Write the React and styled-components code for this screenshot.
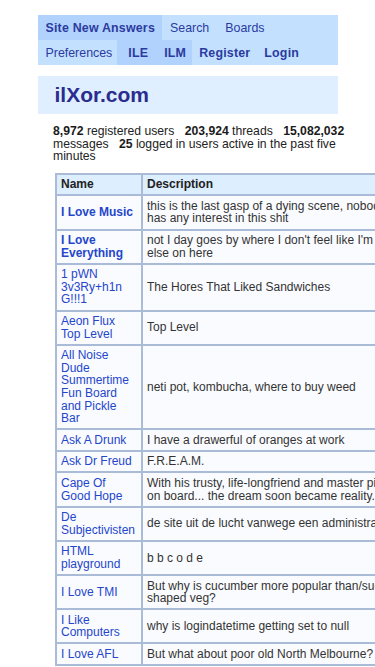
import React from "react";
import styled, { createGlobalStyle } from "styled-components";

const GlobalStyle = createGlobalStyle`
  body {
    margin: 0;
    background: #ffffff;
    font-family: "Liberation Sans", Arial, sans-serif;
    font-size: 12px;
    color: #222;
  }
`;

const Nav = styled.nav`
  width: 300px;
  margin: 15px auto 0;
  background: #c3e1ff;
  font-size: 12.4px;
`;

const NavRow = styled.div`
  display: flex;
  height: 25px;
`;

const NavItem = styled.a`
  display: flex;
  align-items: center;
  padding: ${(p) => p.$pad || "0 8px"};
  color: #2b3a9f;
  font-weight: ${(p) => (p.$bold ? "bold" : "normal")};
  letter-spacing: ${(p) => (p.$bold ? "0.2px" : "0")};
  background: ${(p) => (p.$active ? "#b1d2fc" : "transparent")};
  text-decoration: none;
  white-space: nowrap;
  cursor: pointer;
`;

const NavGroup = styled.div`
  display: flex;
  gap: 16px;
  padding: 0 6px 0 11px;
  background: #b1d2fc;
`;

const GroupLink = styled.a`
  display: flex;
  align-items: center;
  color: #2b3a9f;
  font-weight: bold;
  letter-spacing: 0.2px;
  text-decoration: none;
`;

const Header = styled.header`
  width: 300px;
  height: 38px;
  margin: 11px auto 0;
  box-sizing: border-box;
  padding-left: 17px;
  display: flex;
  align-items: center;
  background: #dfefff;
`;

const Title = styled.h1`
  margin: 0;
  font-size: 21px;
  font-weight: bold;
  color: #2a2c8e;
`;

const Stats = styled.p`
  margin: 11px 16px 0 53px;
  line-height: 12.6px;
  font-size: 12.2px;
  color: #222;
`;

const Stat = styled.span`
  margin-right: 7px;
  b {
    color: #1a1a1a;
  }
`;

const Table = styled.table`
  margin: 10px 0 0 55px;
  width: 345px;
  table-layout: fixed;
  border-collapse: collapse;
  background: #fafbff;
  line-height: 12.6px;
`;

const Th = styled.th`
  border: 2px solid #a9bbd7;
  background: #ddeeff;
  color: #222;
  text-align: left;
  font-weight: bold;
  padding: 3.5px 4px;
  width: ${(p) => (p.$w ? `${p.$w}px` : "auto")};
`;

const Td = styled.td`
  border: 2px solid #a9bbd7;
  padding: 3.5px 4px;
  vertical-align: middle;
  color: #333;
`;

const BoardLink = styled.a`
  color: #2446cb;
  font-weight: ${(p) => (p.$bold ? "bold" : "normal")};
  text-decoration: none;
  cursor: pointer;
`;

const boards = [
  { name: "I Love Music", bold: true, desc: "this is the last gasp of a dying scene, nobody has any interest in this shit" },
  { name: "I Love Everything", bold: true, desc: "not I day goes by where I don't feel like I'm so else on here" },
  { name: "1 pWN 3v3Ry+h1n G!!!1", desc: "The Hores That Liked Sandwiches" },
  { name: "Aeon Flux Top Level", desc: "Top Level" },
  { name: "All Noise Dude Summertime Fun Board and Pickle Bar", desc: "neti pot, kombucha, where to buy weed" },
  { name: "Ask A Drunk", desc: "I have a drawerful of oranges at work" },
  { name: "Ask Dr Freud", desc: "F.R.E.A.M." },
  { name: "Cape Of Good Hope", desc: "With his trusty, life-longfriend and master pilot on board... the dream soon became reality." },
  { name: "De Subjectivisten", desc: "de site uit de lucht vanwege een administratie" },
  { name: "HTML playground", desc: "b b c o d e" },
  { name: "I Love TMI", desc: "But why is cucumber more popular than/such shaped veg?" },
  { name: "I Like Computers", desc: "why is logindatetime getting set to null" },
  { name: "I Love AFL", desc: "But what about poor old North Melbourne?" },
];

export default function App() {
  return (
    <>
      <GlobalStyle />
      <Nav>
        <NavRow>
          <NavItem $active $bold $pad="0 7px 0 8px">Site New Answers</NavItem>
          <NavItem>Search</NavItem>
          <NavItem>Boards</NavItem>
        </NavRow>
        <NavRow>
          <NavItem $pad="0 5px 0 8px">Preferences</NavItem>
          <NavGroup>
            <GroupLink>ILE</GroupLink>
            <GroupLink>ILM</GroupLink>
          </NavGroup>
          <NavItem $bold $pad="0 8px 0 7px">Register</NavItem>
          <NavItem $bold $pad="0 8px 0 6px">Login</NavItem>
        </NavRow>
      </Nav>
      <Header>
        <Title>ilXor.com</Title>
      </Header>
      <Stats>
        <Stat><b>8,972</b> registered users</Stat>{" "}
        <Stat><b>203,924</b> threads</Stat>{" "}
        <Stat><b>15,082,032</b> messages</Stat>{" "}
        <Stat><b>25</b> logged in users active in the past five minutes</Stat>
      </Stats>
      <Table>
        <thead>
          <tr>
            <Th $w={76}>Name</Th>
            <Th>Description</Th>
          </tr>
        </thead>
        <tbody>
          {boards.map((b) => (
            <tr key={b.name}>
              <Td>
                <BoardLink $bold={b.bold}>{b.name}</BoardLink>
              </Td>
              <Td>{b.desc}</Td>
            </tr>
          ))}
        </tbody>
      </Table>
    </>
  );
}
